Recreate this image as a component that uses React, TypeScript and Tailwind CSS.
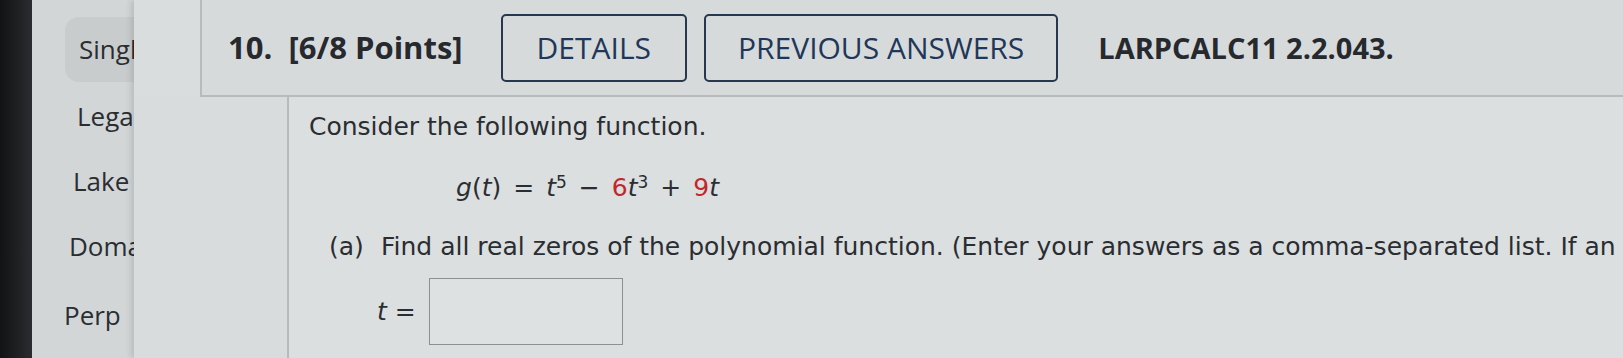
import React from "react";

const sans = { fontFamily: '"Open Sans", "Noto Sans", sans-serif' };
const verd = { fontFamily: '"DejaVu Sans", Verdana, sans-serif' };

export default function App() {
  return (
    <div className="w-[1623px] h-[358px] flex overflow-hidden bg-[#d6d9da] text-[#2a2d32]" style={sans}>
      <div className="w-[32px] shrink-0 bg-gradient-to-r from-[#121315] to-[#2a2c2f]" />
      <div className="w-[102px] shrink-0 overflow-hidden bg-[#d3d6d7] flex flex-col pt-[17px] text-[26px]">
        <div className="ml-[33px] w-[120px] h-[65px] rounded-[14px] bg-[#c9cccd] flex items-center pl-[14px]">Single</div>
        <div className="h-[68px] flex items-center pl-[45px]">Legal</div>
        <div className="h-[62px] flex items-center pl-[41px]">Lake</div>
        <div className="h-[68px] flex items-center pl-[37px]">Domain</div>
        <div className="h-[70px] flex items-center pl-[32px]">Perp</div>
      </div>
      <div className="flex-1 flex flex-col bg-[#dadddd] shadow-[-3px_0_6px_rgba(0,0,0,0.12)]">
        <div className="flex h-[97px] shrink-0">
          <div className="w-[66px] shrink-0" />
          <div className="flex-1 flex items-center border-l-2 border-b-2 border-[#b8bbbc] bg-[#d7dadb] pl-[26px]">
            <span className="text-[31px] font-bold text-[#26292e] whitespace-nowrap">10.&nbsp; [6/8 Points]</span>
            <div className="ml-[38px] h-[68px] px-[34px] flex items-center border-[2.5px] border-[#27374f] rounded-[5px] text-[30px] text-[#1f3758] whitespace-nowrap">DETAILS</div>
            <div className="ml-[17px] h-[68px] px-[32px] flex items-center border-[2.5px] border-[#27374f] rounded-[5px] text-[30px] text-[#1f3758] whitespace-nowrap">PREVIOUS ANSWERS</div>
            <span className="ml-[40px] text-[29px] font-bold text-[#26292e] whitespace-nowrap">LARPCALC11 2.2.043.</span>
          </div>
        </div>
        <div className="flex flex-1">
          <div className="w-[153px] shrink-0 bg-[#d9dcdc]" />
          <div className="flex-1 border-l-2 border-[#b8bbbc] bg-[#dcdfdf] pl-[20px] pt-[12px] whitespace-nowrap text-[25px]" style={verd}>
            <div className="h-[36px] flex items-center">Consider the following function.</div>
            <div className="h-[56px] mt-[8px] pl-[147px] pt-[16px]">
              <span>
                <i>g</i>(<i>t</i>)
                <span className="mx-[12px]">=</span>
                <i>t</i><sup className="text-[17px]">5</sup>
                <span className="mx-[12px]">−</span>
                <span className="text-[#c1272d]">6</span><i>t</i><sup className="text-[17px]">3</sup>
                <span className="mx-[12px]">+</span>
                <span className="text-[#c1272d]">9</span><i>t</i>
              </span>
            </div>
            <div className="h-[36px] mt-[20px] flex items-center">
              <span className="pl-[20px] w-[72px]">(a)</span>
              <span>Find all real zeros of the polynomial function. (Enter your answers as a comma-separated list. If an answer does not exist, enter DNE.)</span>
            </div>
            <div className="mt-[13px] flex items-center pl-[68px]">
              <span className="italic">t</span>
              <span className="ml-[8px]">=</span>
              <div className="ml-[13px] w-[194px] h-[67px] border-[1.5px] border-[#8c8f93] bg-[#dee1e1]" />
            </div>
          </div>
        </div>
      </div>
    </div>
  );
}
